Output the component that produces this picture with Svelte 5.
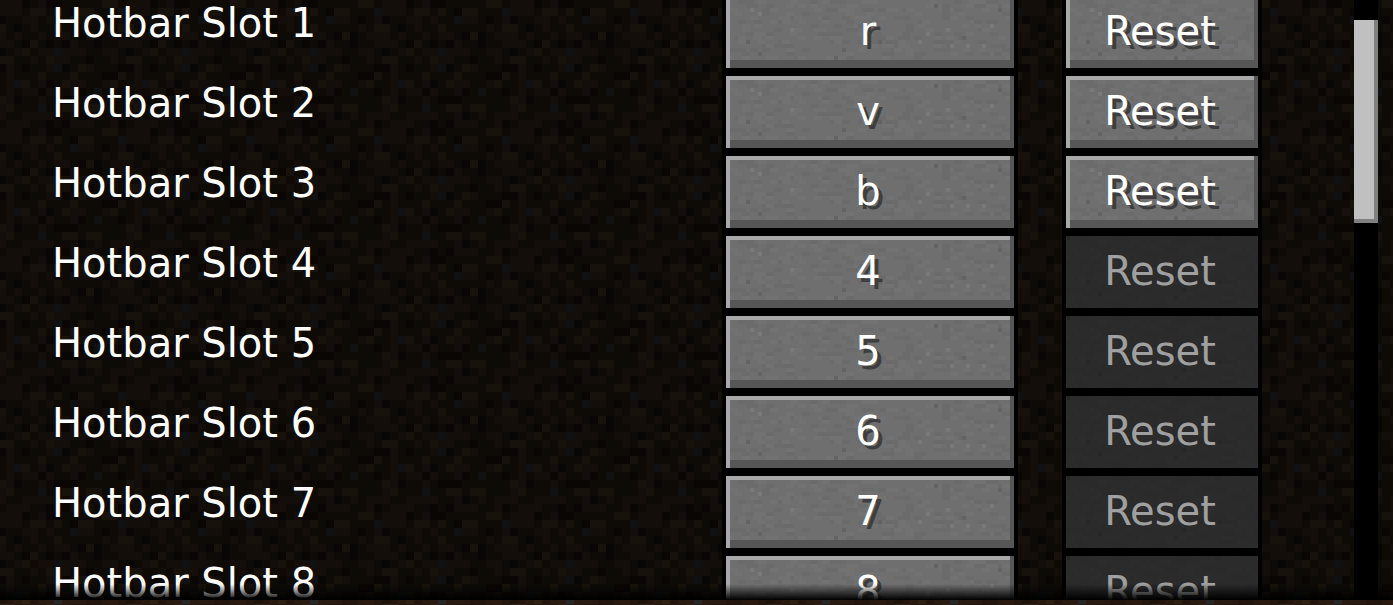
<script>
  const bindings = [
    { name: "Hotbar Slot 1", key: "r", changed: true },
    { name: "Hotbar Slot 2", key: "v", changed: true },
    { name: "Hotbar Slot 3", key: "b", changed: true },
    { name: "Hotbar Slot 4", key: "4", changed: false },
    { name: "Hotbar Slot 5", key: "5", changed: false },
    { name: "Hotbar Slot 6", key: "6", changed: false },
    { name: "Hotbar Slot 7", key: "7", changed: false },
    { name: "Hotbar Slot 8", key: "8", changed: false },
  ];

  // 16x16 dirt tile: k dark, b brown, l light, g gravel
  const dirt = [
    "k.....ll.bbbk.bk",
    "l.kll...gbbb.ll.",
    "..gbb.k.bk..bb.b",
    "l.....b.ll.k.b..",
    "bb.klk.bbb.b..b.",
    ".kb..k..bbb.kl.k",
    "gbbb..bb.k.bl.bb",
    "bb..k..b.ll..b.l",
    "gk.lb...kkb.k..b",
    "..l...kkl.b...l.",
    ".lbb..bl..bgl.bk",
    "..bk.g..k.b.bbkb",
    "kkk......lbk..b.",
    ".ll.ll...bl...g.",
    "..bk.b.bbb..bbbb",
    ".kbbb..bk.bbb..k",
  ];
  const dirtCells = dirt.flatMap((row, y) =>
    [...row].map((c, x) => ({ c, x: x * 8, y: y * 8 })).filter((cell) => cell.c !== ".")
  );

  const dim = { k: "#0a0603", b: "#130e0a", l: "#17120b", g: "#0f1112" };
  const bright = { k: "#1d120c", b: "#291a12", l: "#302117", g: "#272727" };

  // stone speckles on the button faces
  let seed = 41;
  function random() {
    seed = (seed * 16807) % 2147483647;
    return seed / 2147483647;
  }
  const stoneCells = [];
  for (let y = 0; y < 72; y += 4) {
    for (let x = 0; x < 288; x += 4) {
      const r = random();
      if (r < 0.01) stoneCells.push({ x, y, width: 4, fill: "#636363" });
      else if (r < 0.1) stoneCells.push({ x, y, width: 8, fill: "#6b6b6b" });
      else if (r > 0.99) stoneCells.push({ x, y, width: 4, fill: "#797979" });
      else if (r > 0.88) stoneCells.push({ x, y, width: 8, fill: "#727272" });
    }
  }
</script>

{#snippet dirtPattern(id, base, colors, y)}
  <pattern {id} x="54" {y} width="128" height="128" patternUnits="userSpaceOnUse">
    <rect width="128" height="128" fill={base} />
    {#each dirtCells as cell}
      <rect x={cell.x} y={cell.y} width="8" height="8" fill={colors[cell.c]} />
    {/each}
  </pattern>
{/snippet}

{#snippet stone()}
  <svg class="stone" aria-hidden="true"><rect width="100%" height="100%" fill="url(#stone)" /></svg>
{/snippet}

<main class="screen">
  <section class="list">
    <svg class="dirt" aria-hidden="true" shape-rendering="crispEdges">
      <defs>
        {@render dirtPattern("dirt-dim", "#0e0b07", dim, 0)}
        <pattern id="stone" width="288" height="72" patternUnits="userSpaceOnUse">
          <rect width="288" height="72" fill="#6f6f6f" />
          {#each stoneCells as cell}
            <rect x={cell.x} y={cell.y} width={cell.width} height="4" fill={cell.fill} />
          {/each}
        </pattern>
      </defs>
      <rect width="100%" height="100%" fill="url(#dirt-dim)" />
    </svg>

    <ul class="rows">
      {#each bindings as binding, i}
        <li class="row">
          <span class="name" id="binding-{i}">{binding.name}</span>
          <button class="key" aria-describedby="binding-{i}">
            {@render stone()}
            <span class="text">{binding.key}</span>
          </button>
          <button class="reset" disabled={!binding.changed} aria-describedby="binding-{i}">
            {@render stone()}
            <span class="text">Reset</span>
          </button>
        </li>
      {/each}
    </ul>

    <div class="track">
      <div class="thumb"></div>
    </div>
    <div class="fade"></div>
  </section>

  <footer class="footer">
    <svg class="dirt" aria-hidden="true" shape-rendering="crispEdges">
      <defs>
        {@render dirtPattern("dirt-bright", "#22160e", bright, -52)}
      </defs>
      <rect width="100%" height="100%" fill="url(#dirt-bright)" />
    </svg>
  </footer>
</main>

<style>
  :global(body) {
    margin: 0;
    background: #0e0b07;
  }
  .screen {
    display: grid;
    grid-template-rows: minmax(0, 1fr) 5px;
    height: 100vh;
    font-family: "DejaVu Sans", sans-serif;
    font-size: 40px;
    line-height: 40px;
    color: #fff;
  }
  .list {
    position: relative;
    display: flex;
    padding: 0 15px 0 52px;
    overflow: hidden;
  }
  .dirt {
    position: absolute;
    inset: 0;
    width: 100%;
    height: 100%;
  }
  .rows {
    position: relative;
    flex: 1;
    margin: -8px 92px 0 0;
    padding: 0;
    list-style: none;
  }
  .row {
    display: grid;
    grid-template-columns: 1fr 296px 200px;
    column-gap: 44px;
    height: 80px;
  }
  .name {
    padding-top: 11px;
    white-space: nowrap;
  }
  button {
    position: relative;
    box-sizing: border-box;
    height: 80px;
    padding: 0 4px 2px 0;
    border: 4px solid #000;
    background: #0e0e0e;
    color: #fff;
    font: inherit;
    text-shadow: 4px 4px 0 #3e3e3e;
    cursor: pointer;
  }
  .stone {
    position: absolute;
    inset: 0;
    width: 100%;
    height: 100%;
    shape-rendering: crispEdges;
  }
  button::before {
    content: "";
    position: absolute;
    inset: 0;
    z-index: 1;
    box-shadow:
      inset 4px 0 #a8a8a8,
      inset -4px 0 #565656,
      inset 0 4px #a8a8a8,
      inset 0 -8px #565656;
  }
  .text {
    position: relative;
    z-index: 2;
  }
  button:disabled {
    color: #a0a0a0;
    text-shadow: none;
    cursor: default;
  }
  button:disabled::before {
    display: none;
  }
  button:disabled .stone {
    opacity: 0.3;
  }
  .track {
    box-sizing: border-box;
    position: relative;
    width: 24px;
    padding-top: 20px;
    background: #000;
  }
  .thumb {
    height: 35%;
    background: #c0c0c0;
    box-shadow: inset -4px -4px #808080;
  }
  .fade {
    position: absolute;
    inset: auto 0 0;
    z-index: 3;
    height: 16px;
    background: linear-gradient(transparent, #000);
  }
  .footer {
    position: relative;
    overflow: hidden;
  }
</style>
